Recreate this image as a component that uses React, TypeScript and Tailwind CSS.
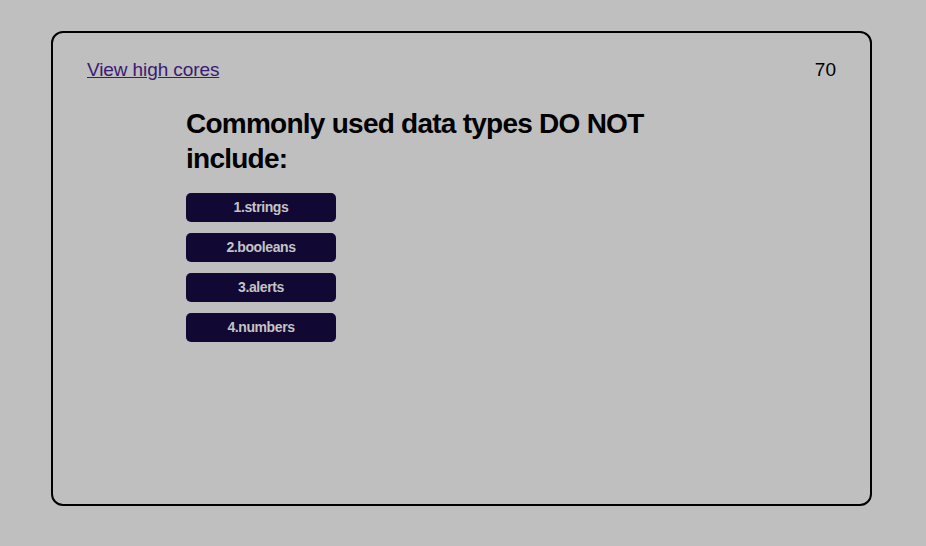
import React from "react";

export default function App() {
  const answers = ["1.strings", "2.booleans", "3.alerts", "4.numbers"];
  return (
    <div
      className="min-h-screen w-full bg-[#bfbfbf] pt-[31px]"
      style={{ fontFamily: '"Liberation Sans", Arial, sans-serif' }}
    >
      <div className="ml-[51px] w-[821px] h-[475px] rounded-[12px] border-2 border-black pl-[34px] pr-[33px] pt-[25px]">
        <div className="flex items-start justify-between">
          <a href="#" className="text-[19px] leading-[24px] text-[#3b1a72] underline tracking-[-0.1px]">
            View high cores
          </a>
          <span className="text-[19px] leading-[24px] text-black pr-[1px]">70</span>
        </div>
        <div className="pl-[99px] pt-[24px]">
          <h1 className="w-[500px] text-[28px] leading-[35px] font-bold text-black tracking-[-0.75px]">
            Commonly used data types DO NOT include:
          </h1>
          <div className="mt-[17px] flex flex-col gap-[11px]">
            {answers.map((a) => (
              <button
                key={a}
                className="w-[150px] h-[29px] rounded-[5px] bg-[#110833] text-[14px] font-bold text-[#c4c4c4] tracking-[-0.4px]"
              >
                {a}
              </button>
            ))}
          </div>
        </div>
      </div>
    </div>
  );
}
